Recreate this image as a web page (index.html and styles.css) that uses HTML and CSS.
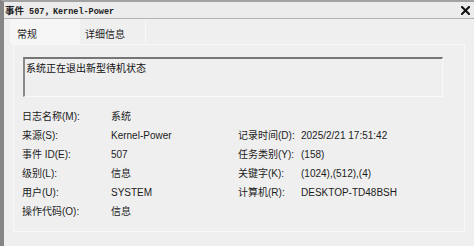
FILE: index.html
```html
<!DOCTYPE html>
<html lang="zh-CN">
<head>
<meta charset="utf-8">
<title>事件 507，Kernel-Power</title>
<link rel="stylesheet" href="styles.css">
</head>
<body>
<div class="window">
  <div class="titlebar">
    <span class="title"><span class="t-cjk">事件</span> 507，Kernel-Power</span>
    <svg class="close" width="9" height="9" viewBox="0 0 9 9"><path d="M1 1L8 8M8 1L1 8" stroke="#111" stroke-width="2" stroke-linecap="square"/></svg>
  </div>
  <div class="tabs">
    <div class="tab active">常规</div>
    <div class="tab">详细信息</div>
  </div>
  <div class="panel">
    <div class="desc">系统正在退出新型待机状态</div>
    <div class="props">
      <div class="lbl">日志名称(M):</div><div class="val">系统</div><div></div><div></div>
      <div class="lbl">来源(S):</div><div class="val">Kernel-Power</div><div class="lbl">记录时间(D):</div><div class="val">2025/2/21 17:51:42</div>
      <div class="lbl">事件 ID(E):</div><div class="val">507</div><div class="lbl">任务类别(Y):</div><div class="val">(158)</div>
      <div class="lbl">级别(L):</div><div class="val">信息</div><div class="lbl">关键字(K):</div><div class="val">(1024),(512),(4)</div>
      <div class="lbl">用户(U):</div><div class="val">SYSTEM</div><div class="lbl">计算机(R):</div><div class="val">DESKTOP-TD48BSH</div>
      <div class="lbl">操作代码(O):</div><div class="val">信息</div><div></div><div></div>
    </div>
  </div>
</div>
</body>
</html>
```

FILE: styles.css
```css
html, body {
  margin: 0;
  padding: 0;
  background: #efefef;
}
.window {
  box-sizing: border-box;
  width: 474px;
  height: 246px;
  border-left: 4px solid #868686;
  border-top: 2px solid #a2a2a2;
  background: #efefef;
  font-family: "Liberation Sans", "Noto Sans CJK SC", sans-serif;
  color: #1c1c1c;
}
.titlebar {
  box-sizing: border-box;
  height: 17px;
  border-bottom: 1px solid #b2b2b2;
  display: flex;
  align-items: center;
  justify-content: space-between;
  padding: 0 4px 0 1px;
  background: #ececec;
}
.title {
  font-family: "Liberation Mono", "Noto Sans CJK SC", monospace;
  font-size: 8.5px;
  font-weight: bold;
  color: #222;
  white-space: pre;
}
.t-cjk {
  font-family: "Noto Sans CJK SC", sans-serif;
  font-size: 9.5px;
}
.close {
  display: block;
}
.tabs {
  display: flex;
  height: 25px;
  padding-left: 6px;
}
.tab {
  box-sizing: border-box;
  display: flex;
  align-items: center;
  padding-top: 3px;
  font-size: 10px;
}
.tab.active {
  width: 70px;
  padding-left: 7px;
  background: #f6f6f6;
}
.tab:not(.active) {
  width: 66px;
  padding-left: 5px;
  border-right: 1px solid #f7f7f7;
}
.panel {
  box-sizing: border-box;
  margin: 0 9px 0 9px;
  height: 188px;
  border: 1px solid #f8f8f8;
  padding: 12px 0 0 9px;
}
.desc {
  box-sizing: border-box;
  width: 420px;
  height: 40px;
  border-top: 2px solid #767676;
  border-left: 2px solid #8a8a8a;
  border-right: 1px solid #fafafa;
  border-bottom: 1px solid #fafafa;
  padding: 3px 0 0 1px;
  font-size: 10px;
  line-height: 14px;
  color: #111;
}
.props {
  margin-top: 10px;
  margin-left: -1px;
  display: grid;
  grid-template-columns: 89px 127px 63px auto;
  grid-auto-rows: 19px;
  align-items: center;
  font-size: 10px;
  line-height: 14px;
}
.lbl, .val {
  white-space: nowrap;
}
```
